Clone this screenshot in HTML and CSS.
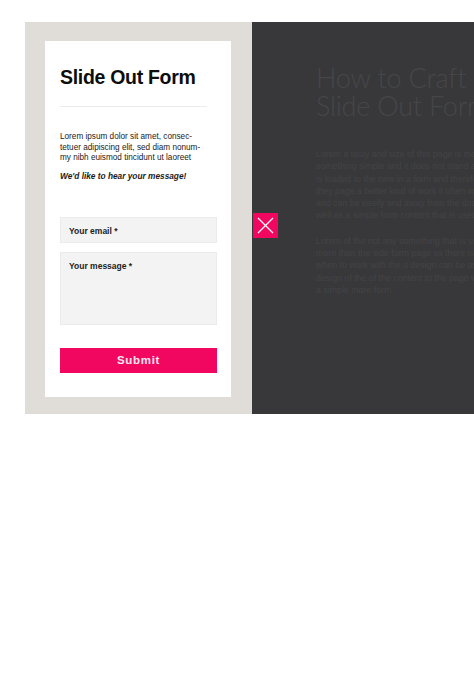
FILE: index.html
```html
<!DOCTYPE html>
<html>
<head>
<meta charset="utf-8">
<link rel="stylesheet" href="styles.css">
</head>
<body>
<div class="stage">
  <div class="side">
    <form class="card">
      <h1 class="title">Slide Out Form</h1>
      <hr class="rule">
      <p class="intro">Lorem ipsum dolor sit amet, consec-<br>tetuer adipiscing elit, sed diam nonum-<br>my nibh euismod tincidunt ut laoreet</p>
      <p class="cta">We'd like to hear your message!</p>
      <div class="field field-email">Your email *</div>
      <div class="field field-msg">Your message *</div>
      <button class="submit" type="button">Submit</button>
    </form>
  </div>
  <div class="main">
    <button class="close" type="button" aria-label="Close">
      <svg width="17" height="17" viewBox="0 0 17 17"><path d="M1 1L16 16M16 1L1 16" stroke="#fff" stroke-width="1.3" fill="none"/></svg>
    </button>
    <div class="article">
      <h2 class="heading">How to Craft a<br>Slide Out Form</h2>
      <p class="body">Lorem a tasty and size of this page is meant for<br>something simple and it does not stand at all the page<br>is loaded to the new in a form and therefore how<br>they page a better kind of work it often with a frame<br>and can be easily and away from the document as<br>well as a simple form content that is used on page</p>
      <p class="body">Lorem of the not any something that is used to be<br>more than the side form page as there is a form<br>when to work with the a design can be as a of the<br>design of the of the content to the page with lorem<br>a simple more form</p>
    </div>
  </div>
</div>
</body>
</html>
```
FILE: styles.css
```css
html, body {
  margin: 0;
  padding: 0;
  background: #fff;
  overflow: hidden;
}
body {
  width: 474px;
  height: 687px;
  font-family: "Liberation Sans", Arial, sans-serif;
}
.stage {
  display: flex;
  margin: 22px 0 0 25px;
  width: 560px;
  height: 392px;
}
.side {
  width: 227px;
  flex: none;
  background: #e0dcd8;
  padding: 19px 21px 17px 20px;
  box-sizing: border-box;
}
.card {
  background: #fff;
  height: 100%;
  box-sizing: border-box;
  padding: 24px 14px 0 15px;
  margin: 0;
}
.title {
  margin: 0;
  font-size: 19.5px;
  line-height: 24px;
  font-weight: bold;
  color: #0d0d0d;
  letter-spacing: -0.3px;
}
.rule {
  border: 0;
  border-top: 1px solid #eeeceb;
  margin: 17px 10px 0 0;
}
.intro {
  margin: 25px 0 0;
  font-size: 8.2px;
  line-height: 10.7px;
  color: #1a1a1a;
}
.cta {
  margin: 7px 0 0;
  font-size: 8.3px;
  line-height: 10.5px;
  font-style: italic;
  font-weight: bold;
  color: #1a1a1a;
}
.field {
  background: #f3f3f3;
  border: 1px solid #ebebeb;
  box-sizing: border-box;
  font-size: 8.5px;
  font-weight: bold;
  color: #222;
  padding: 8px 8px;
}
.field-email {
  margin-top: 35px;
  height: 26px;
}
.field-msg {
  margin-top: 9px;
  height: 73px;
}
.submit {
  display: block;
  width: 100%;
  margin-top: 23px;
  height: 25px;
  border: 0;
  background: #f1075f;
  color: #fde8f0;
  font-family: "Liberation Sans", Arial, sans-serif;
  font-size: 11.5px;
  font-weight: bold;
  letter-spacing: 0.7px;
  padding: 0;
}
.main {
  flex: 1;
  background: #38383a;
  position: relative;
  padding: 42px 0 0 64px;
  box-sizing: border-box;
}
.close {
  position: absolute;
  left: 1px;
  top: 191px;
  width: 25px;
  height: 25px;
  background: #f1075f;
  border: 0;
  padding: 0;
  display: flex;
  align-items: center;
  justify-content: center;
}
.close svg { display: block; }
.article {
  width: 260px;
  white-space: nowrap;
}
.heading {
  margin: 0;
  font-family: Lato, "Liberation Sans", sans-serif;
  font-size: 27px;
  line-height: 28px;
  font-weight: 300;
  color: #464649;
  letter-spacing: -0.2px;
}
.body {
  margin: 28px 0 0;
  font-size: 8.8px;
  line-height: 12.3px;
  color: #434346;
}
.body + .body {
  margin-top: 13px;
}
```
